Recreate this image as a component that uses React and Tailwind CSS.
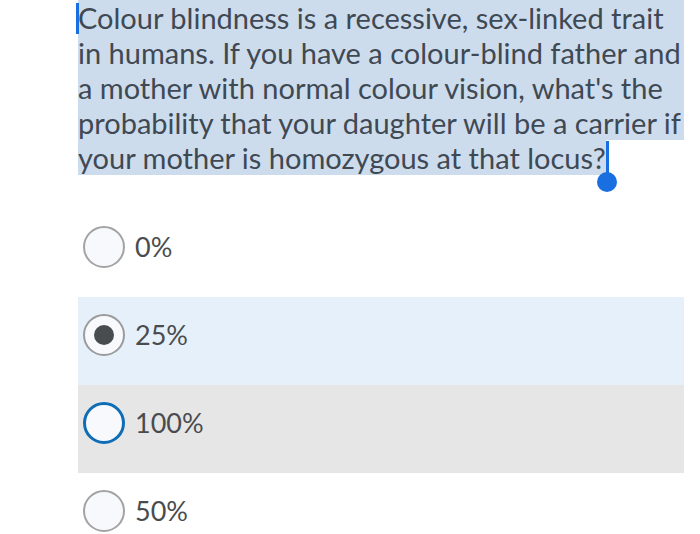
import React from 'react';

const options = [
  { label: '0%', state: 'idle' },
  { label: '25%', state: 'checked' },
  { label: '100%', state: 'focused' },
  { label: '50%', state: 'idle' },
];

function Radio({ state }) {
  if (state === 'checked') {
    return (
      <div className="w-[42px] h-[42px] rounded-full border-2 border-[#9b9b9b] bg-[#f8f9fc] flex items-center justify-center shrink-0">
        <div className="w-[20px] h-[20px] rounded-full bg-[#494c4e]"></div>
      </div>
    );
  }
  if (state === 'focused') {
    return <div className="w-[42px] h-[42px] rounded-full border-[3px] border-[#0f6db5] bg-[#f8f9fc] shrink-0"></div>;
  }
  return <div className="w-[42px] h-[42px] rounded-full border-2 border-[#a3a3a3] bg-[#f8f9fc] shrink-0"></div>;
}

function OptionRow({ label, state }) {
  const bg = state === 'checked' ? 'bg-[#e6f0fb]' : state === 'focused' ? 'bg-[#e6e6e6]' : 'bg-white';
  return (
    <div className={`h-[88px] pt-[17px] pl-[5px] ${bg}`}>
      <div className="flex items-center gap-[10px]">
        <Radio state={state} />
        <span className="text-[27px] leading-[30px] text-[#494c4e]">{label}</span>
      </div>
    </div>
  );
}

export default function App() {
  return (
    <div className="w-[700px] h-[534px] bg-white overflow-hidden" style={{ fontFamily: 'Lato, "Open Sans", sans-serif' }}>
      <div className="ml-[78px] w-[606px]">
        <div className="relative text-[29px] leading-[35px] text-[#3f4954]">
          <div className="bg-[#cddcec] whitespace-nowrap">
            Colour blindness is a recessive, sex-linked trait
            <br />
            in humans. If you have a colour-blind father and
            <br />
            a mother with normal colour vision, what's the
            <br />
            probability that your daughter will be a carrier if
          </div>
          <span className="relative inline-block bg-[#cddcec] whitespace-nowrap">
            your mother is homozygous at that locus?
            <span className="absolute -right-[3px] top-[1px] w-[3px] h-[34px] bg-[#1a6fe0]"></span>
            <span className="absolute -right-[11px] top-[32px] w-[20px] h-[20px] rounded-full bg-[#1a6fe0]"></span>
          </span>
          <span className="absolute -left-[2px] top-[3px] w-[3px] h-[31px] bg-[#1a6fe0]"></span>
        </div>
        <div className="mt-[34px]">
          {options.map((o) => (
            <OptionRow key={o.label} label={o.label} state={o.state} />
          ))}
        </div>
      </div>
    </div>
  );
}
